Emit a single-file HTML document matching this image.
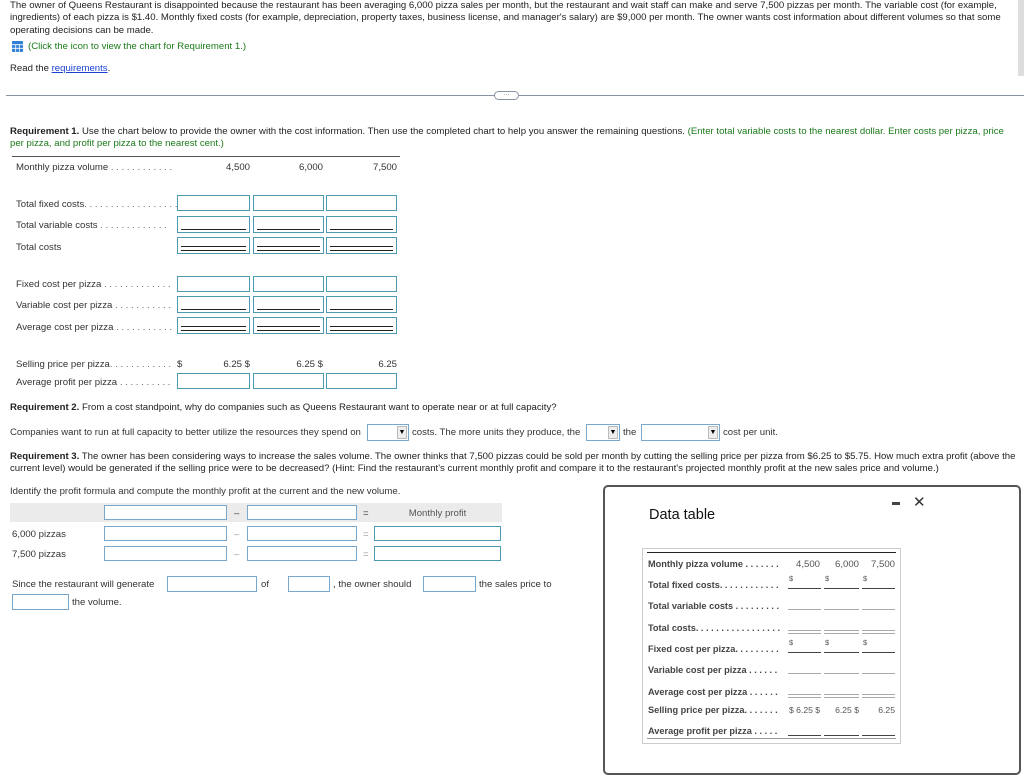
<!DOCTYPE html>
<html><head><meta charset="utf-8"><style>
*{margin:0;padding:0;box-sizing:border-box}
body{width:1024px;height:761px;position:relative;overflow:hidden;background:#fff;font-family:"Liberation Sans",Arial,sans-serif;font-size:9.6px;color:#333}
.a{position:absolute;white-space:nowrap;line-height:11px}
.g{color:#1a7a1a}
.in{position:absolute;border:1px solid #4a9ab0;background:#fff}
.in.s{border-color:#7aa7cc}
.in.u::after{content:"";position:absolute;left:3px;right:3px;bottom:2px;border-bottom:1px solid #222}
.in.d::after{content:"";position:absolute;left:3px;right:3px;bottom:2px;height:3px;border-top:1px solid #222;border-bottom:1px solid #222}
.dd{position:absolute;border:1px solid #7aa7cc;background:#fff;height:17px}
.dd i{position:absolute;right:1px;top:1px;width:10px;height:13px;background:#eee;border:1px solid #bbb;font-style:normal;font-size:7px;text-align:center;line-height:12px;color:#000}
.dot{color:#666}
.r{text-align:right}
.dt{font-weight:bold;color:#444;font-size:9.2px}
</style></head><body>
<div class="a" style="left:10px;top:0px;color:#222">The owner of Queens Restaurant is disappointed because the restaurant has been averaging 6,000 pizza sales per month, but the restaurant and wait staff can make and serve 7,500 pizzas per month. The variable cost (for example,</div>
<div class="a" style="left:10px;top:12px;color:#222">ingredients) of each pizza is $1.40. Monthly fixed costs (for example, depreciation, property taxes, business license, and manager's salary) are $9,000 per month. The owner wants cost information about different volumes so that some</div>
<div class="a" style="left:10px;top:25px;color:#222">operating decisions can be made.</div>
<svg class="a" style="left:12px;top:41px" width="11" height="11"><rect x="0" y="0" width="11" height="11" rx="1" fill="#2f7fd6"/><path d="M0 3.7H11M0 7.3H11M3.7 3.7V11M7.3 3.7V11" stroke="#fff" stroke-width="0.8"/></svg>
<div class="a g" style="left:28px;top:41px">(Click the icon to view the chart for Requirement 1.)</div>
<div class="a" style="left:10px;top:63px;color:#222">Read the <span style="color:#1a3fd6;text-decoration:underline">requirements</span>.</div>
<div style="position:absolute;left:1018px;top:0;width:6px;height:76px;background:#ddd"></div>
<div style="position:absolute;left:6px;top:95px;width:1018px;border-top:1px solid #8a93a6"></div>
<div style="position:absolute;left:494px;top:91px;width:25px;height:9px;border:1px solid #8a93a6;border-radius:5px;background:#fff;font-size:6px;text-align:center;line-height:6px;color:#555">···</div>

<div class="a" style="left:10px;top:126px;color:#222"><b>Requirement 1.</b> Use the chart below to provide the owner with the cost information. Then use the completed chart to help you answer the remaining questions. <span class="g">(Enter total variable costs to the nearest dollar. Enter costs per pizza, price</span></div>
<div class="a g" style="left:10px;top:138px">per pizza, and profit per pizza to the nearest cent.)</div>
<div style="position:absolute;left:12px;top:156px;width:388px;border-top:1px solid #555"></div>
<div class="a" style="left:16px;top:162px">Monthly pizza volume <span class="dot">. . . . . . . . . . . .</span></div>
<div class="a r" style="left:200px;width:50px;top:162px">4,500</div>
<div class="a r" style="left:273px;width:50px;top:162px">6,000</div>
<div class="a r" style="left:347px;width:50px;top:162px">7,500</div>

<div class="a" style="left:16px;top:199px">Total fixed costs<span class="dot">. . . . . . . . . . . . . . . . . .</span></div>
<div class="a" style="left:16px;top:220px">Total variable costs <span class="dot">. . . . . . . . . . . . .</span></div>
<div class="a" style="left:16px;top:242px">Total costs</div>
<div class="a" style="left:16px;top:279px">Fixed cost per pizza <span class="dot">. . . . . . . . . . . . .</span></div>
<div class="a" style="left:16px;top:300px">Variable cost per pizza <span class="dot">. . . . . . . . . . .</span></div>
<div class="a" style="left:16px;top:322px">Average cost per pizza <span class="dot">. . . . . . . . . . .</span></div>
<div class="a" style="left:16px;top:359px">Selling price per pizza<span class="dot">. . . . . . . . . . . .</span></div>
<div class="a" style="left:177px;top:359px">$</div>
<div class="a" style="left:16px;top:377px">Average profit per pizza <span class="dot">. . . . . . . . . .</span></div>
<div class="a r" style="left:200px;width:50px;top:359px">6.25 $</div>
<div class="a r" style="left:273px;width:50px;top:359px">6.25 $</div>
<div class="a r" style="left:347px;width:50px;top:359px">6.25</div>

<div class="in" style="left:177px;top:195px;width:73px;height:16px"></div>
<div class="in" style="left:253px;top:195px;width:71px;height:16px"></div>
<div class="in" style="left:326px;top:195px;width:71px;height:16px"></div>
<div class="in u" style="left:177px;top:216px;width:73px;height:17px"></div>
<div class="in u" style="left:253px;top:216px;width:71px;height:17px"></div>
<div class="in u" style="left:326px;top:216px;width:71px;height:17px"></div>
<div class="in d" style="left:177px;top:237px;width:73px;height:17px"></div>
<div class="in d" style="left:253px;top:237px;width:71px;height:17px"></div>
<div class="in d" style="left:326px;top:237px;width:71px;height:17px"></div>
<div class="in" style="left:177px;top:276px;width:73px;height:16px"></div>
<div class="in" style="left:253px;top:276px;width:71px;height:16px"></div>
<div class="in" style="left:326px;top:276px;width:71px;height:16px"></div>
<div class="in u" style="left:177px;top:296px;width:73px;height:17px"></div>
<div class="in u" style="left:253px;top:296px;width:71px;height:17px"></div>
<div class="in u" style="left:326px;top:296px;width:71px;height:17px"></div>
<div class="in d" style="left:177px;top:317px;width:73px;height:17px"></div>
<div class="in d" style="left:253px;top:317px;width:71px;height:17px"></div>
<div class="in d" style="left:326px;top:317px;width:71px;height:17px"></div>
<div class="in" style="left:177px;top:373px;width:73px;height:16px"></div>
<div class="in" style="left:253px;top:373px;width:71px;height:16px"></div>
<div class="in" style="left:326px;top:373px;width:71px;height:16px"></div>

<div class="a" style="left:10px;top:402px;color:#222"><b>Requirement 2.</b> From a cost standpoint, why do companies such as Queens Restaurant want to operate near or at full capacity?</div>
<div class="a" style="left:10px;top:427px">Companies want to run at full capacity to better utilize the resources they spend on</div>
<div class="dd" style="left:367px;top:424px;width:42px"><i>▼</i></div>
<div class="a" style="left:412px;top:427px">costs. The more units they produce, the</div>
<div class="dd" style="left:586px;top:424px;width:34px"><i>▼</i></div>
<div class="a" style="left:623px;top:427px">the</div>
<div class="dd" style="left:641px;top:424px;width:79px"><i>▼</i></div>
<div class="a" style="left:723px;top:427px">cost per unit.</div>

<div class="a" style="left:10px;top:451px;color:#222"><b>Requirement 3.</b> The owner has been considering ways to increase the sales volume. The owner thinks that 7,500 pizzas could be sold per month by cutting the selling price per pizza from $6.25 to $5.75. How much extra profit (above the</div>
<div class="a" style="left:10px;top:463px;color:#222">current level) would be generated if the selling price were to be decreased? (Hint: Find the restaurant's current monthly profit and compare it to the restaurant's projected monthly profit at the new sales price and volume.)</div>
<div class="a" style="left:10px;top:486px">Identify the profit formula and compute the monthly profit at the current and the new volume.</div>

<div style="position:absolute;left:10px;top:503px;width:492px;height:19px;background:#ebebeb"></div>
<div class="in s" style="left:104px;top:505px;width:123px;height:15px"></div>
<div class="in s" style="left:247px;top:505px;width:110px;height:15px"></div>
<div class="a" style="left:234px;top:508px">–</div>
<div class="a" style="left:363px;top:508px">=</div>
<div class="a" style="left:375px;top:508px;width:125px;text-align:center;color:#555">Monthly profit</div>
<div class="a" style="left:12px;top:529px">6,000 pizzas</div>
<div class="a" style="left:12px;top:549px">7,500 pizzas</div>
<div class="in s" style="left:104px;top:526px;width:123px;height:15px"></div>
<div class="in s" style="left:247px;top:526px;width:110px;height:15px"></div>
<div class="in" style="left:374px;top:526px;width:127px;height:15px"></div>
<div class="in s" style="left:104px;top:546px;width:123px;height:15px"></div>
<div class="in s" style="left:247px;top:546px;width:110px;height:15px"></div>
<div class="in" style="left:374px;top:546px;width:127px;height:15px"></div>
<div class="a" style="left:234px;top:529px;color:#999">–</div>
<div class="a" style="left:363px;top:529px;color:#999">=</div>
<div class="a" style="left:234px;top:549px;color:#999">–</div>
<div class="a" style="left:363px;top:549px;color:#999">=</div>

<div class="a" style="left:12px;top:579px">Since the restaurant will generate</div>
<div class="in s" style="left:167px;top:576px;width:90px;height:16px"></div>
<div class="a" style="left:261px;top:579px">of</div>
<div class="in s" style="left:288px;top:576px;width:42px;height:16px"></div>
<div class="a" style="left:333px;top:579px">, the owner should</div>
<div class="in s" style="left:423px;top:576px;width:53px;height:16px"></div>
<div class="a" style="left:479px;top:579px">the sales price to</div>
<div class="in s" style="left:12px;top:594px;width:57px;height:16px"></div>
<div class="a" style="left:72px;top:597px">the volume.</div>

<div style="position:absolute;left:603px;top:485px;width:418px;height:290px;border:2px solid #555;border-radius:5px;background:#fff"></div>
<div class="a" style="left:649px;top:507px;font-size:14.5px;line-height:17px;color:#111">Data table</div>
<div style="position:absolute;left:892px;top:502px;width:8px;height:3px;background:#444"></div>
<div class="a" style="left:913px;top:495px;font-size:15px;line-height:15px;color:#333">✕</div>
<div style="position:absolute;left:642px;top:548px;width:259px;height:196px;border:1px solid #ccc"></div>
<div style="position:absolute;left:647px;top:552px;width:249px;border-top:1px solid #222"></div>
<div style="position:absolute;left:647px;top:738px;width:249px;border-top:1px solid #999"></div>
<div class="a dt" style="left:648px;top:559px">Monthly pizza volume <span>. . . . . . .</span></div>
<div class="a r" style="left:788px;width:32px;top:559px;color:#555">4,500</div>
<div class="a r" style="left:826px;width:33px;top:559px;color:#555">6,000</div>
<div class="a r" style="left:862px;width:33px;top:559px;color:#555">7,500</div>
<div class="a dt" style="left:648px;top:580px">Total fixed costs<span>. . . . . . . . . . . .</span></div>
<div class="a dt" style="left:648px;top:601px">Total variable costs <span>. . . . . . . . .</span></div>
<div class="a dt" style="left:648px;top:623px">Total costs<span>. . . . . . . . . . . . . . . . .</span></div>
<div class="a dt" style="left:648px;top:644px">Fixed cost per pizza<span>. . . . . . . . .</span></div>
<div class="a dt" style="left:648px;top:665px">Variable cost per pizza <span>. . . . . .</span></div>
<div class="a dt" style="left:648px;top:687px">Average cost per pizza <span>. . . . . .</span></div>
<div class="a dt" style="left:648px;top:705px">Selling price per pizza<span>. . . . . . .</span></div>
<div class="a dt" style="left:648px;top:726px">Average profit per pizza <span>. . . . .</span></div>
<div class="a" style="left:789px;top:573px;font-size:7.5px;color:#555">$</div>
<div class="a" style="left:825px;top:573px;font-size:7.5px;color:#555">$</div>
<div class="a" style="left:863px;top:573px;font-size:7.5px;color:#555">$</div>
<div class="a" style="left:789px;top:637px;font-size:7.5px;color:#555">$</div>
<div class="a" style="left:825px;top:637px;font-size:7.5px;color:#555">$</div>
<div class="a" style="left:863px;top:637px;font-size:7.5px;color:#555">$</div>
<div class="a" style="left:789px;top:705px;color:#555;font-size:8.6px">$ 6.25 $</div>
<div class="a r" style="left:826px;width:33px;top:705px;color:#555;font-size:8.6px">6.25 $</div>
<div class="a r" style="left:862px;width:33px;top:705px;color:#555;font-size:8.6px">6.25</div>
<svg style="position:absolute;left:788px;top:580px" width="108" height="160">
<g stroke="#444" stroke-width="1">
<path d="M0 8.5H33M36 8.5H71M74 8.5H107"/>
<path d="M0 72.5H33M36 72.5H71M74 72.5H107"/>
<path d="M0 155.5H33M36 155.5H71M74 155.5H107"/>
</g>
<g stroke="#aaa" stroke-width="1">
<path d="M0 29.5H33M36 29.5H71M74 29.5H107"/>
<path d="M0 93.5H33M36 93.5H71M74 93.5H107"/>
<path d="M0 50.5H33M36 50.5H71M74 50.5H107M0 53.5H33M36 53.5H71M74 53.5H107"/>
<path d="M0 114.5H33M36 114.5H71M74 114.5H107M0 117.5H33M36 117.5H71M74 117.5H107"/>
</g>
</svg>
</body></html>
